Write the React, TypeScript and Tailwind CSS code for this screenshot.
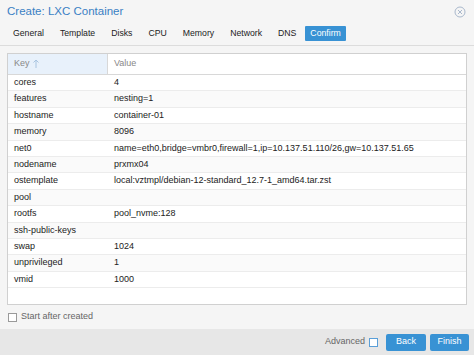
import React from "react";

const rows: [string, string][] = [
  ["cores", "4"],
  ["features", "nesting=1"],
  ["hostname", "container-01"],
  ["memory", "8096"],
  ["net0", "name=eth0,bridge=vmbr0,firewall=1,ip=10.137.51.110/26,gw=10.137.51.65"],
  ["nodename", "prxmx04"],
  ["ostemplate", "local:vztmpl/debian-12-standard_12.7-1_amd64.tar.zst"],
  ["pool", ""],
  ["rootfs", "pool_nvme:128"],
  ["ssh-public-keys", ""],
  ["swap", "1024"],
  ["unprivileged", "1"],
  ["vmid", "1000"],
];

const tabs = ["General", "Template", "Disks", "CPU", "Memory", "Network", "DNS", "Confirm"];

export default function App() {
  return (
    <div
      className="w-[474px] h-[355px] bg-[#f5f5f5] flex flex-col overflow-hidden text-[#222]"
      style={{ fontFamily: '"Liberation Sans", Arial, sans-serif' }}
    >
      <div className="h-[22px] flex items-center justify-between pl-[7px] pr-[8px] pt-[1px]">
        <span className="text-[11.5px] text-[#3a7fc4]">Create: LXC Container</span>
        <svg width="12" height="12" viewBox="0 0 12 12">
          <circle cx="6" cy="6" r="5" fill="none" stroke="#a9b8cc" strokeWidth="1" />
          <path d="M4 4 L8 8 M8 4 L4 8" stroke="#a9b8cc" strokeWidth="1" />
        </svg>
      </div>
      <div className="h-[24px] flex items-center pl-[5px] border-b border-[#dcdcdc]">
        {tabs.map((t) => (
          <div
            key={t}
            className={
              t === "Confirm"
                ? "h-[15px] px-[5px] ml-[1px] flex items-center bg-[#3892d4] text-white text-[8.7px] rounded-[1px]"
                : "h-[15px] px-[8px] flex items-center text-[8.7px] text-[#222]"
            }
          >
            {t}
          </div>
        ))}
      </div>
      <div className="mx-[7px] mt-[7px] h-[252px] border border-[#d0d0d0] bg-white flex flex-col text-[9px]">
        <div className="h-[21px] flex border-b border-[#d8d8d8] shrink-0">
          <div className="w-[100px] bg-[#e8f1fb] border-r border-[#d8d8d8] flex items-center pl-[6px] text-[#888]">
            Key
            <svg width="8" height="10" viewBox="0 0 8 10" className="ml-[2px]">
              <path d="M4 1 V9 M1.5 3.5 L4 1 L6.5 3.5" stroke="#a8c4e0" strokeWidth="1" fill="none" />
            </svg>
          </div>
          <div className="flex-1 flex items-center pl-[6px] text-[#888]">Value</div>
        </div>
        {rows.map(([k, v], i) => (
          <div
            key={k}
            className={
              "h-[16.42px] flex items-center border-b border-[#ececec] shrink-0 " +
              (i % 2 === 1 ? "bg-[#fafafa]" : "bg-white")
            }
          >
            <div className="w-[100px] pl-[6px] whitespace-nowrap">{k}</div>
            <div className="flex-1 pl-[6px] whitespace-nowrap">{v}</div>
          </div>
        ))}
      </div>
      <div className="h-[24px] flex items-center pl-[8px] gap-[4px] text-[9px] text-[#666]">
        <div className="w-[9px] h-[9px] border border-[#9a9a9a] bg-white" />
        <span>Start after created</span>
      </div>
      <div className="flex-1 bg-[#e7e7e7] flex items-center justify-end pr-[5px] gap-[4px] text-[9px]">
        <span className="text-[#666]">Advanced</span>
        <div className="w-[9px] h-[9px] border border-[#5a9fd8] bg-white mr-[4px]" />
        <div className="w-[40px] h-[17px] bg-[#3892d4] text-white flex items-center justify-center rounded-[2px]">Back</div>
        <div className="w-[39px] h-[17px] bg-[#3892d4] text-white flex items-center justify-center rounded-[2px]">Finish</div>
      </div>
    </div>
  );
}
